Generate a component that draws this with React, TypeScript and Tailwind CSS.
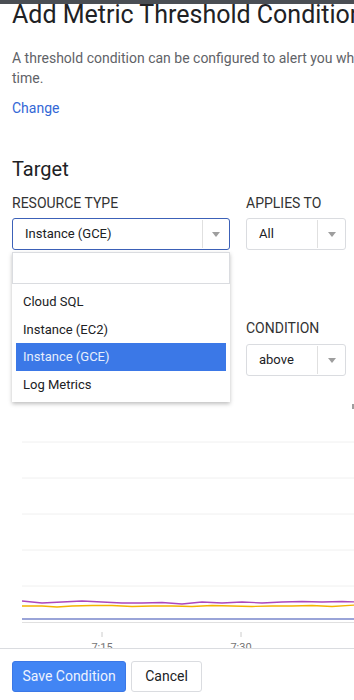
import { useState } from 'react';

function Arrow() {
  return (
    <svg width="8" height="5" viewBox="0 0 8 5" className="block">
      <path d="M0 0 L8 0 L4 5 Z" fill="#9e9e9e" />
    </svg>
  );
}

function Select({ value, focused = false, arrowW = 'w-[28px]' }: { value: string; focused?: boolean; arrowW?: string }) {
  return (
    <div
      className={`flex h-[32px] items-stretch rounded-[3px] border bg-white ${
        focused ? 'border-[#3c61b8]' : 'border-[#dadce0]'
      }`}
    >
      <div className="flex flex-1 items-center pl-[12px] text-[13px] text-[#202124]">{value}</div>
      <div className={`my-[1px] flex ${arrowW} items-center justify-center border-l border-[#e0e0e0]`}>
        <Arrow />
      </div>
    </div>
  );
}

const options = ['Cloud SQL', 'Instance (EC2)', 'Instance (GCE)', 'Log Metrics'];

function Dropdown({ selected }: { selected: string }) {
  return (
    <div className="absolute left-0 top-[calc(100%+2px)] z-10 w-[218px] bg-white pb-[4px] shadow-[0_2px_4px_rgba(0,0,0,0.25)]">
      <div className="h-[32px] border border-[#dadce0] bg-white" />
      <ul className="px-[4px] pt-[4px]">
        {options.map((o) => (
          <li
            key={o}
            className={`flex h-[27.5px] items-center pl-[7px] text-[13px] ${
              o === selected ? 'bg-[#3b78e7] text-[#e6eefc]' : 'text-[#202124]'
            }`}
          >
            {o}
          </li>
        ))}
      </ul>
    </div>
  );
}

function Chart() {
  const purple =
    'M10 202 L30 204 L50 203 L70 202 L90 203 L110 204 L130 204 L150 203.5 L170 205 L190 203 L210 204 L230 203 L250 204 L270 203 L290 202.5 L310 203 L330 202.5 L345 203';
  const yellow =
    'M10 207 L30 207 L45 208 L60 207 L80 206.5 L100 206.5 L120 207.5 L140 207 L160 207 L180 207.5 L200 206.5 L220 207 L240 207.5 L260 207 L280 207 L300 206.5 L320 207.5 L345 206';
  return (
    <svg width="342" height="260" className="mt-[23px] block overflow-visible">
      {[43, 79, 115, 151, 187].map((y) => (
        <line key={y} x1="10" x2="342" y1={y} y2={y} stroke="#f0f0f0" strokeWidth="1" />
      ))}
      <rect x="340" y="5" width="2" height="5" fill="#9e9e9e" />
      <path d={purple} fill="none" stroke="#ab47bc" strokeWidth="1.3" />
      <path d={yellow} fill="none" stroke="#f4b400" strokeWidth="1.3" />
      <line x1="10" x2="342" y1="220" y2="220" stroke="#7986cb" strokeWidth="1.5" />
      <line x1="10" x2="342" y1="223.5" y2="223.5" stroke="#e0e0e0" strokeWidth="1" />
      <line x1="90" x2="90" y1="233" y2="238" stroke="#cccccc" strokeWidth="1" />
      <line x1="229" x2="229" y1="233" y2="238" stroke="#cccccc" strokeWidth="1" />
      <text x="90" y="252" textAnchor="middle" fontSize="11" fill="#757575" fontFamily="Roboto, sans-serif">
        7:15
      </text>
      <text x="229" y="252" textAnchor="middle" fontSize="11" fill="#757575" fontFamily="Roboto, sans-serif">
        7:30
      </text>
    </svg>
  );
}

export default function App() {
  const [resource] = useState('Instance (GCE)');
  return (
    <div className="relative flex h-[700px] w-[354px] flex-col overflow-hidden bg-white font-['Roboto',sans-serif]">
      <div className="absolute left-0 right-0 top-0 z-20 h-[4px] bg-[#4a4e54]" />
      <main className="relative flex-1 overflow-hidden px-3">
        <h1 className="whitespace-nowrap text-[25px] leading-[30px] text-[#202124]">
          Add Metric Threshold Condition
        </h1>
        <p className="mt-[18px] whitespace-nowrap text-[14px] leading-[20px] text-[#5f6368]">
          A threshold condition can be configured to alert you when a metric crosses a value for a set amount of
          <br />
          time.
        </p>
        <a className="mt-[10px] block text-[14px] leading-[20px] text-[#3367d6]">Change</a>
        <h2 className="mt-[37px] text-[20px] leading-[28px] text-[#202124]">Target</h2>
        <div className="mt-[10px] grid grid-cols-[218px_100px] gap-x-4">
          <div>
            <div className="text-[14px] leading-[20px] text-[#333]">RESOURCE TYPE</div>
            <div className="relative mt-[5px]">
              <Select value={resource} focused arrowW="w-[27px]" />
              <Dropdown selected={resource} />
            </div>
          </div>
          <div>
            <div className="text-[14px] leading-[20px] text-[#333]">APPLIES TO</div>
            <div className="mt-[5px]">
              <Select value="All" />
            </div>
          </div>
          <div />
          <div className="mt-[68px]">
            <div className="text-[14px] leading-[20px] text-[#333]">CONDITION</div>
            <div className="mt-[6px]">
              <Select value="above" />
            </div>
          </div>
        </div>
        <Chart />
      </main>
      <footer className="flex h-[52px] shrink-0 gap-[5px] border-t border-[#dadce0] bg-white px-3 pt-[12px]">
        <button className="h-[31px] w-[114px] rounded-[3px] border border-[#3b78e7] bg-[#4285f4] text-[14px] text-[#eef3fe]">
          Save Condition
        </button>
        <button className="h-[31px] w-[71px] rounded-[3px] border border-[#dadce0] bg-white text-[14px] text-[#202124]">
          Cancel
        </button>
      </footer>
    </div>
  );
}
